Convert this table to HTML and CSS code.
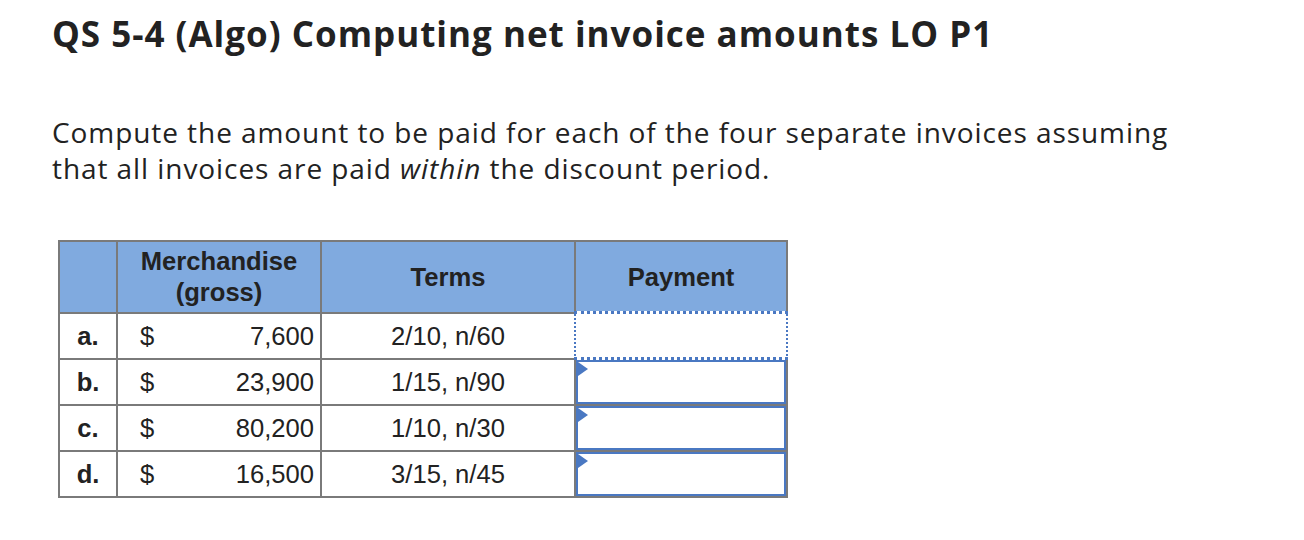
FILE: index.html
```html
<!DOCTYPE html>
<html>
<head>
<meta charset="utf-8">
<link rel="stylesheet" href="styles.css">
</head>
<body>
<div class="page">
  <h1 class="title">QS 5-4 (Algo) Computing net invoice amounts LO P1</h1>
  <p class="prompt">Compute the amount to be paid for each of the four separate invoices assuming that all invoices are paid <em>within</em> the discount period.</p>
  <table class="grid">
    <colgroup>
      <col class="c-label"><col class="c-merch"><col class="c-terms"><col class="c-pay">
    </colgroup>
    <thead>
      <tr>
        <th></th>
        <th>Merchandise<br>(gross)</th>
        <th>Terms</th>
        <th>Payment</th>
      </tr>
    </thead>
    <tbody>
      <tr>
        <td class="label">a.</td>
        <td class="merch"><span>$</span><span>7,600</span></td>
        <td class="terms">2/10, n/60</td>
        <td class="pay"><div class="field focus"></div></td>
      </tr>
      <tr>
        <td class="label">b.</td>
        <td class="merch"><span>$</span><span>23,900</span></td>
        <td class="terms">1/15, n/90</td>
        <td class="pay"><div class="field"></div></td>
      </tr>
      <tr>
        <td class="label">c.</td>
        <td class="merch"><span>$</span><span>80,200</span></td>
        <td class="terms">1/10, n/30</td>
        <td class="pay"><div class="field"></div></td>
      </tr>
      <tr>
        <td class="label">d.</td>
        <td class="merch"><span>$</span><span>16,500</span></td>
        <td class="terms">3/15, n/45</td>
        <td class="pay"><div class="field"></div></td>
      </tr>
    </tbody>
  </table>
</div>
</body>
</html>
```
FILE: styles.css
```css
html, body {
  margin: 0;
  padding: 0;
  background: #ffffff;
}
.page {
  padding: 14px 0 0 52px;
  color: #222222;
  font-family: "Open Sans", "Lato", sans-serif;
}
.title {
  margin: 0;
  font-size: 35px;
  font-weight: 700;
  line-height: 40px;
  letter-spacing: 1px;
  color: #222222;
}
.prompt {
  margin: 60px 0 0 0;
  width: 1150px;
  font-size: 28px;
  line-height: 36px;
  letter-spacing: 0.93px;
  color: #222222;
}
.prompt em {
  font-style: italic;
}
.grid {
  margin: 54px 0 0 6px;
  border-collapse: collapse;
  font-family: "Liberation Sans", Arial, sans-serif;
  font-size: 25.6px;
  color: #222222;
}
.c-label { width: 58px; }
.c-merch { width: 204px; }
.c-terms { width: 254px; }
.c-pay { width: 212px; }
.grid th, .grid td {
  border: 2px solid #7a7a7a;
  padding: 0;
}
.grid th {
  background: #80aadf;
  font-weight: 700;
  height: 70px;
  line-height: 31px;
  text-align: center;
  vertical-align: middle;
}
.grid td {
  height: 44px;
  line-height: 28px;
  vertical-align: middle;
}
.label {
  text-align: center;
  font-weight: 700;
}
.merch span:first-child {
  float: left;
  margin-left: 22px;
}
.merch span:last-child {
  float: right;
  margin-right: 6px;
}
.terms {
  text-align: center;
}
.pay {
  position: relative;
}
.field {
  box-sizing: border-box;
  height: 44px;
  border: 2px solid #4a78c2;
  position: relative;
}
.field::before {
  content: "";
  position: absolute;
  left: 0;
  top: 0;
  border-style: solid;
  border-width: 7px 0 7px 10px;
  border-color: transparent transparent transparent #4a78c2;
}
.field.focus {
  border: none;
}
.field.focus::before {
  left: -2px;
  top: -3px;
  right: -2px;
  bottom: -2px;
  border: 2px dotted #4a78c2;
  border-width: 3px 2px 3px 2px;
  background: #ffffff;
}
```
